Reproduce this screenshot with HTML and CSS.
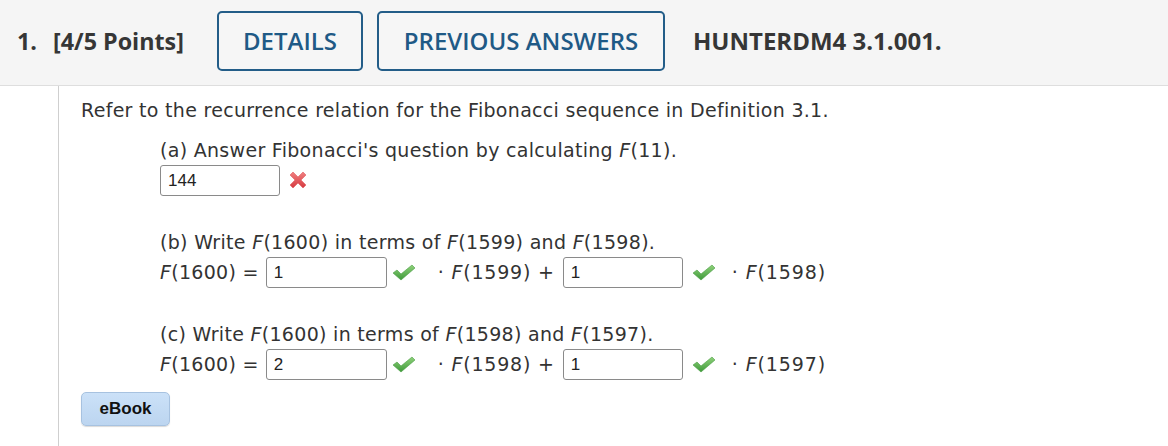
FILE: index.html
```html
<!DOCTYPE html>
<html>
<head>
<meta charset="utf-8">
<link rel="stylesheet" href="styles.css">
</head>
<body>
<div class="header">
  <div class="qnum"><span class="num">1.</span><span>[4/5 Points]</span></div>
  <button class="hbtn details">DETAILS</button>
  <button class="hbtn prev">PREVIOUS ANSWERS</button>
  <div class="qid">HUNTERDM4 3.1.001.</div>
</div>
<div class="main">
  <div class="gutter"></div>
  <div class="content">
    <p class="intro">Refer to the recurrence relation for the Fibonacci sequence in Definition 3.1.</p>
    <div class="part">
      <p class="ptext">(a) Answer Fibonacci's question by calculating <i>F</i>(11).</p>
      <div class="row">
        <span class="inp short">144</span>
        <svg class="mark" width="20" height="20" viewBox="0 0 20 20"><defs><linearGradient id="rx" x1="0" y1="0" x2="0" y2="1"><stop offset="0" stop-color="#f08080"/><stop offset="1" stop-color="#d63a40"/></linearGradient></defs><path d="M2 5 L5 2 L10 7 L15 2 L18 5 L13 10 L18 15 L15 18 L10 13 L5 18 L2 15 L7 10 Z" fill="url(#rx)" stroke="#e05a5f" stroke-width="0.6" stroke-linejoin="round"/></svg>
      </div>
    </div>
    <div class="part pb">
      <p class="ptext">(b) Write <i>F</i>(1600) in terms of <i>F</i>(1599) and <i>F</i>(1598).</p>
      <div class="row">
        <span class="lhs"><i>F</i>(1600) = </span>
        <span class="inp">1</span>
        <svg class="check" width="24" height="20" viewBox="0 0 24 20"><defs><linearGradient id="gc1" x1="0" y1="0" x2="0" y2="1"><stop offset="0" stop-color="#8fd17a"/><stop offset="1" stop-color="#3f9a3a"/></linearGradient></defs><path d="M1 11 L5 8 L9 12 L20 3 L23 6 L9 18 Z" fill="url(#gc1)" stroke="#4a9e44" stroke-width="0.6" stroke-linejoin="round"/></svg>
        <span class="mid">· <i>F</i>(1599) + </span>
        <span class="inp inp2">1</span>
        <svg class="check check2" width="24" height="20" viewBox="0 0 24 20"><path d="M1 11 L5 8 L9 12 L20 3 L23 6 L9 18 Z" fill="url(#gc1)" stroke="#4a9e44" stroke-width="0.6" stroke-linejoin="round"/></svg>
        <span class="tail">· <i>F</i>(1598)</span>
      </div>
    </div>
    <div class="part pc">
      <p class="ptext">(c) Write <i>F</i>(1600) in terms of <i>F</i>(1598) and <i>F</i>(1597).</p>
      <div class="row">
        <span class="lhs"><i>F</i>(1600) = </span>
        <span class="inp">2</span>
        <svg class="check" width="24" height="20" viewBox="0 0 24 20"><path d="M1 11 L5 8 L9 12 L20 3 L23 6 L9 18 Z" fill="url(#gc1)" stroke="#4a9e44" stroke-width="0.6" stroke-linejoin="round"/></svg>
        <span class="mid">· <i>F</i>(1598) + </span>
        <span class="inp inp2">1</span>
        <svg class="check check2" width="24" height="20" viewBox="0 0 24 20"><path d="M1 11 L5 8 L9 12 L20 3 L23 6 L9 18 Z" fill="url(#gc1)" stroke="#4a9e44" stroke-width="0.6" stroke-linejoin="round"/></svg>
        <span class="tail">· <i>F</i>(1597)</span>
      </div>
    </div>
    <button class="ebook">eBook</button>
  </div>
</div>
</body>
</html>
```
FILE: styles.css
```css
html, body {
  margin: 0;
  padding: 0;
  background: #fff;
}
body {
  width: 1168px;
  height: 446px;
  overflow: hidden;
}
.header {
  background: #f5f5f5;
  border-bottom: 1px solid #dedede;
  display: flex;
  align-items: center;
  padding-left: 17px;
  padding-bottom: 4px;
  box-sizing: border-box;
  height: 86px;
  font-family: "Open Sans", sans-serif;
}
.qnum {
  font-size: 23.3px;
  font-weight: 700;
  color: #363636;
  display: flex;
  gap: 16px;
  width: 200px;
}
.hbtn {
  height: 60px;
  box-sizing: border-box;
  border: 2px solid #235d88;
  border-radius: 5px;
  background: #f6f6f6;
  color: #1f5a86;
  font-family: "Open Sans", sans-serif;
  font-size: 24px;
  font-weight: 600;
  padding: 0;
  margin-right: 14px;
}
.details { width: 146px; }
.prev { width: 288px; margin-right: 28px; }
.qid {
  font-size: 24px;
  font-weight: 700;
  color: #363636;
}
.main {
  display: flex;
  font-family: "DejaVu Sans", Verdana, sans-serif;
  color: #333;
  font-size: 19px;
  letter-spacing: 0.3px;
}
.gutter {
  width: 58px;
  border-right: 1px solid #cfcfcf;
  height: 360px;
}
.content {
  padding-left: 22px;
}
p { margin: 0; }
.intro {
  margin-top: 12px;
  line-height: 24px;
}
.part {
  margin-left: 79px;
  margin-top: 16px;
}
.ptext { line-height: 24px; }
.pb { margin-top: 34px; }
.pc { margin-top: 34px; }
.row {
  display: flex;
  align-items: center;
  height: 32px;
  margin-top: 2px;
}
.inp {
  display: inline-block;
  box-sizing: border-box;
  width: 121px;
  height: 31px;
  border: 1px solid #8a8a8a;
  border-radius: 3px;
  font-family: "Liberation Sans", Arial, sans-serif;
  font-size: 17px;
  letter-spacing: 0;
  line-height: 29px;
  padding-left: 7px;
  color: #222;
}
.short { width: 120px; }
.inp2 { width: 120px; }
.mark { margin-left: 8px; }
.lhs { margin-right: 7px; }
.check { margin-left: 5px; margin-right: 22px; }
.check2 { margin-left: 9px; margin-right: 18px; }
.mid { margin-right: 8px; letter-spacing: 0.8px; }
.tail { margin-left: -2px; letter-spacing: 0.9px; }
.ebook {
  margin-top: 12px;
  width: 89px;
  height: 34px;
  background: linear-gradient(#cbe1f8, #bcd5f0);
  border: 1px solid #a7c2e0;
  border-radius: 5px;
  box-shadow: 0 1px 1px rgba(0,0,0,0.15);
  font-family: "Liberation Sans", Arial, sans-serif;
  font-weight: 700;
  font-size: 17px;
  letter-spacing: 0;
  color: #111;
  padding: 0;
}
```
